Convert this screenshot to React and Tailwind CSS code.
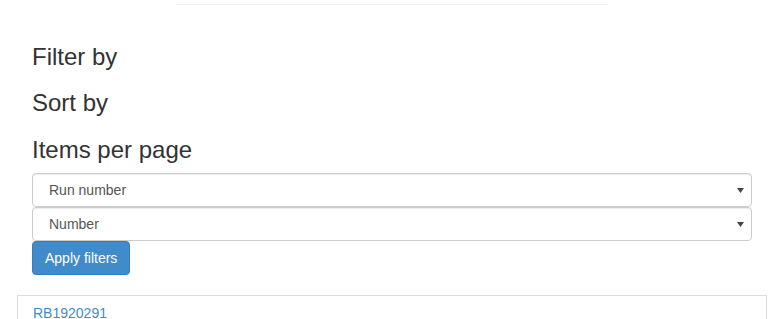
import React from "react";

function FakeSelect({ label }) {
  return (
    <div className="flex h-[34px] w-[720px] items-center justify-between rounded-[4px] border border-[#ccc] bg-white pl-[16px] pr-[7px] text-[14px] text-[#555] shadow-[inset_0_1px_1px_rgba(0,0,0,0.075)]">
      <span>{label}</span>
      <svg width="7" height="5" viewBox="0 0 7 5">
        <path d="M0 0 L7 0 L3.5 5 Z" fill="#444" />
      </svg>
    </div>
  );
}

export default function App() {
  return (
    <div className="min-h-[319px] bg-white font-['Liberation_Sans',Arial,sans-serif] text-[14px] leading-[20px] text-[#333]">
      <div className="pt-[4px]">
        <div className="ml-[176px] h-px w-[432px] bg-[#eee]" />
      </div>

      <div className="ml-[32px]">
        <h3 className="mt-[39px] text-[24px] leading-[26.4px]">Filter by</h3>
        <h3 className="mt-[20px] text-[24px] leading-[26.4px]">Sort by</h3>
        <h3 className="mt-[20px] text-[24px] leading-[26.4px]">Items per page</h3>

        <div className="mt-[10px] flex flex-col">
          <FakeSelect label="Run number" />
          <FakeSelect label="Number" />
        </div>

        <button
          type="button"
          className="h-[34px] rounded-[4px] border border-[#357ebd] bg-[#428bca] px-[12px] text-[14px] text-white"
        >
          Apply filters
        </button>
      </div>

      <div className="ml-[17px] mt-[20px] w-[750px] border border-b-0 border-[#ddd] px-[15px] pt-[7px]">
        <a href="#" className="text-[#428bca]">
          RB1920291
        </a>
      </div>
    </div>
  );
}
